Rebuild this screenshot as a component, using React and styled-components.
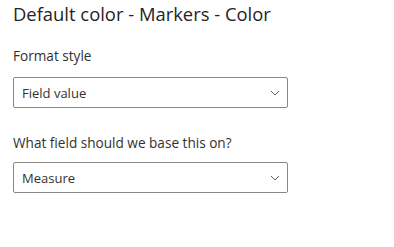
import React from 'react'
import styled, { createGlobalStyle } from 'styled-components'

const GlobalStyle = createGlobalStyle`
  html, body {
    margin: 0;
    padding: 0;
    background: #ffffff;
  }
  body {
    font-family: "Open Sans", "Noto Sans", "Liberation Sans", sans-serif;
    color: #252423;
  }
`

const Panel = styled.section`
  width: 394px;
  height: 247px;
  padding: 2px 0 0 13px;
  box-sizing: border-box;
`

const Title = styled.h2`
  margin: 0 0 20px;
  font-size: 18.4px;
  font-weight: 500;
  line-height: 24px;
  color: #252423;
`

const Field = styled.div`
  display: flex;
  flex-direction: column;
  margin-bottom: ${(p) => p.gap || 0}px;
`

const Label = styled.label`
  font-size: 13.6px;
  line-height: 20px;
  color: #323130;
  margin-bottom: ${(p) => p.space || 11}px;
`

const Select = styled.div`
  width: 275px;
  height: 31px;
  box-sizing: border-box;
  border: 1px solid #8a8886;
  border-radius: 2px;
  display: flex;
  align-items: center;
  justify-content: space-between;
  padding: 0 6px 0 8px;
  font-size: 13px;
  color: #323130;
  cursor: pointer;
`

const Chevron = () => (
  <svg width="12" height="8" viewBox="0 0 12 8" fill="none">
    <path d="M2 2 L6 6 L10 2" stroke="#605e5c" strokeWidth="1" />
  </svg>
)

const Dropdown = ({ value }) => (
  <Select>
    <span>{value}</span>
    <Chevron />
  </Select>
)

export default function App() {
  return (
    <>
      <GlobalStyle />
      <Panel>
        <Title>Default color - Markers - Color</Title>
        <Field gap={25}>
          <Label>Format style</Label>
          <Dropdown value="Field value" />
        </Field>
        <Field>
          <Label space={9}>What field should we base this on?</Label>
          <Dropdown value="Measure" />
        </Field>
      </Panel>
    </>
  )
}
